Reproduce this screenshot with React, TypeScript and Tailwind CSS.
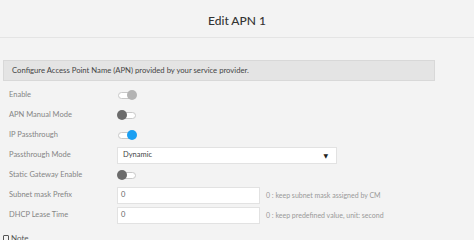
import React from "react";

const font = { fontFamily: '"Lato", "DejaVu Sans", sans-serif' };

const Toggle = ({ on, color }: { on: boolean; color: string }) => {
  return (
    <div className="relative w-[20px] h-[10px] flex items-center">
      <div className="w-[18px] h-[7px] ml-[1px] rounded-full border border-[#c8c8c8] bg-white" />
      <div
        className={`absolute top-0 w-[10px] h-[10px] rounded-full ${color} ${on ? "right-0" : "left-0"}`}
      />
    </div>
  );
};

const Row = ({ label, children }: { label: string; children?: React.ReactNode }) => {
  return (
    <div className="flex items-center h-[20px]">
      <div className="w-[117px] pl-[9px] text-[7.5px] text-[#858585]">{label}</div>
      <div className="flex items-center">{children}</div>
    </div>
  );
};

const Input = ({ hint }: { hint: string }) => (
  <div className="flex items-center">
    <div className="w-[143px] h-[17px] bg-white border border-[#e2e2e2] flex items-center pl-[3px] text-[7.5px] text-[#666]">
      0
    </div>
    <span className="ml-[6px] text-[7px] text-[#999]">{hint}</span>
  </div>
);

export default function App() {
  return (
    <div className="w-[474px] h-[240px] bg-[#f3f3f3] overflow-hidden" style={font}>
      <div className="h-[38px] border-b border-[#e4e4e4] flex items-center justify-center">
        <h1 className="text-[12px] font-medium text-[#333] pt-[4px]">Edit APN 1</h1>
      </div>

      <div className="pt-[22px]">
        <div className="ml-[3px] w-[432px] h-[21px] bg-[#e4e4e4] border border-[#d8d8d8] flex items-center pl-[8px] text-[7.7px] text-[#444]">
          Configure Access Point Name (APN) provided by your service provider.
        </div>
      </div>

      <div className="mt-[4px] flex flex-col">
        <Row label="Enable">
          <Toggle on color="bg-[#b3b3b3]" />
        </Row>
        <Row label="APN Manual Mode">
          <Toggle on={false} color="bg-[#6b6b6b]" />
        </Row>
        <Row label="IP Passthrough">
          <Toggle on color="bg-[#1a9ff2]" />
        </Row>
        <Row label="Passthrough Mode">
          <div className="w-[220px] h-[17px] bg-white border border-[#e2e2e2] flex items-center justify-between pl-[5px] pr-[8px] text-[7.5px] text-[#444]">
            <span>Dynamic</span>
            <span className="text-[6px] text-[#222]">▼</span>
          </div>
        </Row>
        <Row label="Static Gateway Enable">
          <Toggle on={false} color="bg-[#6b6b6b]" />
        </Row>
        <Row label="Subnet mask Prefix">
          <Input hint="0 : keep subnet mask assigned by CM" />
        </Row>
        <Row label="DHCP Lease Time">
          <Input hint="0 : keep predefined value, unit: second" />
        </Row>
      </div>

      <div className="mt-[7px] flex items-center pl-[3px] gap-[2px] text-[8px] text-[#555]">
        <span className="w-[6px] h-[7px] border border-[#555] rounded-[1px]" />
        <span>Note</span>
      </div>
    </div>
  );
}
